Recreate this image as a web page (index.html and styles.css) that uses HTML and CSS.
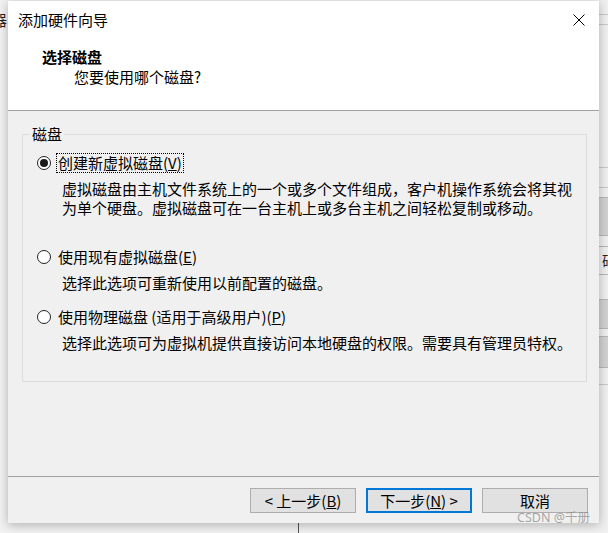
FILE: index.html
```html
<!DOCTYPE html>
<html lang="zh-CN">
<head>
<meta charset="utf-8">
<title>添加硬件向导</title>
<link rel="stylesheet" href="styles.css">
</head>
<body>
<div class="desktop">
  <div class="bg-top">网络适配器　虚拟机设置　硬件　选项</div>
  <div class="bg-left">器</div>
  <div class="bg-right">
    <div class="bg-line l1"></div>
    <div class="bg-line l2"></div>
    <div class="bg-line l3"></div>
    <div class="bg-line l4"></div>
    <div class="bg-block b1"></div>
    <div class="bg-cell c1">研</div>
    <div class="bg-block b2"></div>
    <div class="bg-block b3"></div>
    <div class="bg-line l5"></div>
  </div>
  <div class="bg-vline"></div>

  <div class="dialog">
    <div class="header">
      <div class="titlebar">
        <span class="title">添加硬件向导</span>
        <svg class="close" width="12" height="12" viewBox="0 0 12 12">
          <path d="M0.5 0.5 L11.5 11.5 M11.5 0.5 L0.5 11.5" stroke="#000" stroke-width="1" fill="none"/>
        </svg>
      </div>
      <div class="heading">选择磁盘</div>
      <div class="subheading">您要使用哪个磁盘?</div>
    </div>
    <div class="sep"></div>
    <div class="body">
      <fieldset class="group">
        <legend class="legend">磁盘</legend>
        <div class="options">
          <div class="option">
            <div class="row">
              <span class="radio checked"></span>
              <span class="label focus">创建新虚拟磁盘(<u>V</u>)</span>
            </div>
            <div class="desc">虚拟磁盘由主机文件系统上的一个或多个文件组成，客户机操作系统会将其视<br>为单个硬盘。虚拟磁盘可在一台主机上或多台主机之间轻松复制或移动。</div>
          </div>
          <div class="option opt2">
            <div class="row">
              <span class="radio"></span>
              <span class="label">使用现有虚拟磁盘(<u>E</u>)</span>
            </div>
            <div class="desc">选择此选项可重新使用以前配置的磁盘。</div>
          </div>
          <div class="option opt3">
            <div class="row">
              <span class="radio"></span>
              <span class="label">使用物理磁盘 (适用于高级用户)(<u>P</u>)</span>
            </div>
            <div class="desc">选择此选项可为虚拟机提供直接访问本地硬盘的权限。需要具有管理员特权。</div>
          </div>
        </div>
      </fieldset>
    </div>
    <div class="sep"></div>
    <div class="footer">
      <button class="btn">&lt; 上一步(<u>B</u>)</button>
      <button class="btn default">下一步(<u>N</u>) &gt;</button>
      <button class="btn">取消</button>
    </div>
  </div>
  <div class="watermark">CSDN @千册</div>
</div>
</body>
</html>
```

FILE: styles.css
```css
* { box-sizing: border-box; }
html, body { margin: 0; padding: 0; }
body {
  width: 608px;
  height: 533px;
  overflow: hidden;
  background: #f0f0f0;
  font-family: "Noto Sans CJK SC", "Noto Sans", sans-serif;
  font-size: 15px;
  color: #000;
}
.desktop {
  position: relative;
  width: 608px;
  height: 533px;
  overflow: hidden;
  background: #f2f2f2;
}
.bg-top {
  position: absolute;
  left: 78px;
  top: -18px;
  font-size: 15px;
  line-height: 18px;
  color: #222;
  white-space: nowrap;
}
.bg-left {
  position: absolute;
  left: -8px;
  top: 11px;
  font-size: 15px;
  line-height: 18px;
  color: #222;
}
.bg-right {
  position: absolute;
  left: 599px;
  top: 0;
  width: 9px;
  height: 533px;
  background: #f0f0f0;
}
.bg-line { position: absolute; left: 0; width: 9px; height: 1px; background: #c8c8c8; }
.l1 { top: 14px; }
.l2 { top: 24px; }
.l3 { top: 167px; }
.l4 { top: 187px; }
.l5 { top: 384px; }
.bg-block { position: absolute; left: 0; width: 9px; background: #d2d2d2; border-top: 1px solid #b8b8b8; border-bottom: 1px solid #b8b8b8; }
.b1 { top: 197px; height: 39px; }
.b2 { top: 299px; height: 30px; }
.b3 { top: 336px; height: 32px; }
.bg-cell {
  position: absolute;
  left: 0; top: 246px;
  width: 9px; height: 29px;
  border-top: 1px solid #b8b8b8;
  border-bottom: 1px solid #b8b8b8;
  font-size: 14px;
  line-height: 27px;
  text-indent: 3px;
  overflow: hidden;
  color: #222;
}
.bg-vline {
  position: absolute;
  left: 298px;
  top: 520px;
  width: 1px;
  height: 13px;
  background: #555;
}

.dialog {
  position: absolute;
  left: 8px;
  top: 1px;
  width: 591px;
  height: 522px;
  display: flex;
  flex-direction: column;
  background: #f0f0f0;
  box-shadow: 0 2px 10px rgba(0,0,0,0.28);
}
.header {
  height: 109px;
  background: #fff;
  display: flex;
  flex-direction: column;
}
.titlebar {
  height: 38px;
  display: flex;
  align-items: center;
  justify-content: space-between;
  padding: 0 14px 0 10px;
}
.title { line-height: 20px; color: #000; }
.close { display: block; }
.heading {
  margin-top: 8px;
  padding-left: 34px;
  line-height: 20px;
  font-weight: bold;
}
.subheading {
  padding-left: 66px;
  line-height: 20px;
}
.sep {
  height: 1px;
  background: #a0a0a0;
  flex: none;
}
.body {
  height: 365px;
  padding: 13px 12px 0 14px;
}
.group {
  margin: 0;
  padding: 0;
  border: 1px solid #dcdcdc;
  min-width: 0;
}
.legend {
  margin-left: 7px;
  padding: 0 2px;
  line-height: 20px;
}
.options {
  padding: 9px 10px 29px 14px;
}
.row {
  display: flex;
  align-items: center;
  height: 20px;
}
.radio {
  width: 14px;
  height: 14px;
  border: 1px solid #222;
  border-radius: 50%;
  background: #fff;
  display: flex;
  align-items: center;
  justify-content: center;
  flex: none;
}
.radio.checked::after {
  content: "";
  width: 8px;
  height: 8px;
  border-radius: 50%;
  background: #1a1a1a;
}
.label {
  margin-left: 5px;
  line-height: 18px;
  padding: 0 1px;
  border: 1px dotted transparent;
  white-space: nowrap;
}
.label.focus { border-color: #000; }
.desc {
  margin-top: 6px;
  margin-left: 25px;
  line-height: 19px;
  white-space: nowrap;
}
.opt2 { margin-top: 30px; }
.opt3 { margin-top: 15px; }
.footer {
  flex: 1;
  display: flex;
  justify-content: flex-end;
  align-items: flex-start;
  gap: 10px;
  padding: 11px 11px 0 0;
}
.btn {
  width: 106px;
  height: 25px;
  margin: 0;
  padding: 0;
  background: #e1e1e1;
  border: 1px solid #adadad;
  font-family: inherit;
  font-size: 15px;
  line-height: 21px;
  color: #000;
}
.btn.default {
  border: 2px solid #0078d7;
}
.watermark {
  position: absolute;
  left: 517px;
  top: 509px;
  font-size: 12.5px;
  line-height: 18px;
  color: rgba(140,140,140,0.75);
  font-family: "Noto Sans", "Noto Sans CJK SC", sans-serif;
  white-space: nowrap;
}
```
